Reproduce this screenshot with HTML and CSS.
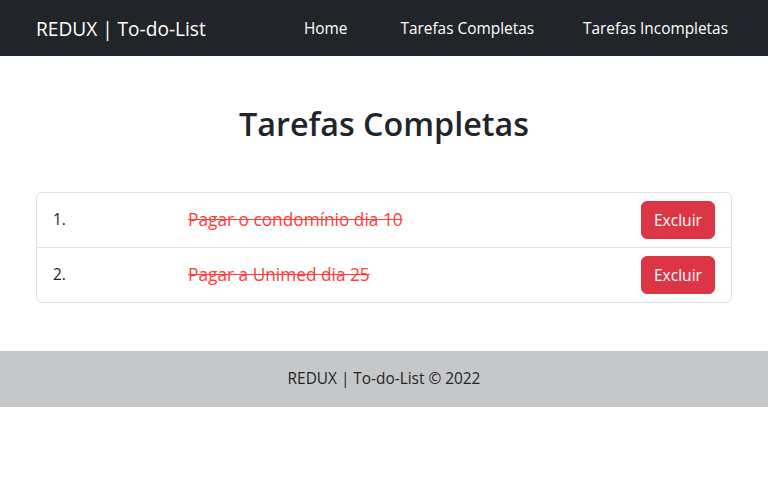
FILE: index.html
```html
<!DOCTYPE html>
<html lang="pt-BR">
<head>
<meta charset="utf-8">
<title>REDUX | To-do-List</title>
<link rel="stylesheet" href="styles.css">
</head>
<body>
<nav class="navbar">
  <div class="container nav-inner">
    <a class="brand" href="#">REDUX | To-do-List</a>
    <ul class="nav-links">
      <li class="nav-home"><a href="#">Home</a></li>
      <li><a href="#">Tarefas Completas</a></li>
      <li><a href="#">Tarefas Incompletas</a></li>
    </ul>
  </div>
</nav>
<main class="container">
  <h1 class="title">Tarefas Completas</h1>
  <ul class="list">
    <li class="item">
      <span class="num">1.</span>
      <span class="task">Pagar o condomínio dia 10</span>
      <button class="btn-danger">Excluir</button>
    </li>
    <li class="item">
      <span class="num">2.</span>
      <span class="task">Pagar a Unimed dia 25</span>
      <button class="btn-danger">Excluir</button>
    </li>
  </ul>
</main>
<footer class="footer">REDUX | To-do-List © 2022</footer>
</body>
</html>
```

FILE: styles.css
```css
* { box-sizing: border-box; }
body {
  margin: 0;
  font-family: "Open Sans", "Noto Sans", sans-serif;
  font-size: 15.4px;
  line-height: 1.5;
  color: #212529;
  background: #fff;
}
.container {
  width: 720px;
  margin: 0 auto;
  padding: 0 12px;
}
.navbar {
  background: #212529;
  height: 56px;
}
.nav-inner {
  display: flex;
  align-items: center;
  justify-content: space-between;
  height: 56px;
  padding-top: 1px;
}
.brand {
  color: #fff;
  font-size: 19.1px;
  text-decoration: none;
  line-height: 30px;
}
.nav-links {
  display: flex;
  gap: 49px;
  list-style: none;
  margin: 0;
  padding: 0 4px 0 0;
}
.nav-home { padding-right: 4px; }
.nav-links a {
  color: #fff;
  text-decoration: none;
  font-size: 15.4px;
}
.title {
  margin: 48px 0 49px;
  text-align: center;
  font-size: 32.3px;
  font-weight: 600;
  line-height: 1.2;
}
.list {
  list-style: none;
  margin: 0;
  padding: 0;
  border: 1px solid #dee2e6;
  border-radius: 6px;
}
.item {
  display: grid;
  grid-template-columns: 135px 1fr auto;
  align-items: center;
  padding: 8px 16px;
  min-height: 54px;
}
.item + .item {
  border-top: 1px solid #dee2e6;
}
.num { color: #212529; font-size: 15.4px; }
.task {
  color: #ff3b3b;
  font-size: 17.3px;
  text-decoration: line-through;
}
.btn-danger {
  font-family: inherit;
  font-size: 15.6px;
  line-height: 24px;
  color: #fff;
  background: #dc3545;
  border: 1px solid #dc3545;
  border-radius: 6px;
  padding: 6px 12px;
}
.footer {
  margin-top: 48px;
  background: #c6c7c8;
  text-align: center;
  padding: 16px 0;
  line-height: 24px;
}
```
